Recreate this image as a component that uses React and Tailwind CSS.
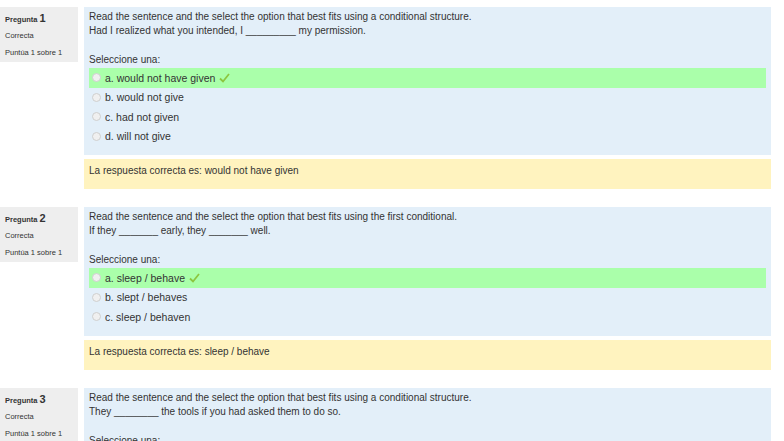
import React from "react";

const questions = [
  {
    num: 1,
    prompt: "Read the sentence and the select the option that best fits using a conditional structure.",
    sentence: "Had I realized what you intended, I _________ my permission.",
    options: ["a. would not have given", "b. would not give", "c. had not given", "d. will not give"],
    correct: "would not have given",
  },
  {
    num: 2,
    prompt: "Read the sentence and the select the option that best fits using the first conditional.",
    sentence: "If they _______ early, they _______ well.",
    options: ["a. sleep / behave", "b. slept / behaves", "c. sleep / behaven"],
    correct: "sleep / behave",
  },
  {
    num: 3,
    prompt: "Read the sentence and the select the option that best fits using a conditional structure.",
    sentence: "They ________ the tools if you had asked them to do so.",
    options: ["a. would have finished", "b. would finish", "c. had finished"],
    correct: "would have finished",
  },
];

function Check() {
  return (
    <svg width="11" height="10" viewBox="0 0 11 10" className="ml-1 inline-block">
      <path d="M1 5.5 L4 8.5 L10 1" fill="none" stroke="#8cc63f" strokeWidth="1.8" />
    </svg>
  );
}

function Question({ q }) {
  return (
    <div className="flex gap-[6px] mb-[18px]">
      <div className="w-[78px] h-[55px] shrink-0 bg-[#eeeeee] pl-[5px] pt-[6px] text-[7.5px] leading-[10px] text-[#333]">
        <div className="font-bold">
          Pregunta <span className="text-[11px]">{q.num}</span>
        </div>
        <div className="mt-[6px]">Correcta</div>
        <div className="mt-[7px]">Puntúa 1 sobre 1</div>
      </div>
      <div className="flex-1 min-w-0">
        <div className="bg-[#e3eff9] px-[5px] pt-[3px] pb-[9px] text-[10px] leading-[14px] text-[#333]">
          <div>{q.prompt}</div>
          <div>{q.sentence}</div>
          <div className="mt-[15px] mb-[1px]">Seleccione una:</div>
          {q.options.map((o, i) => (
            <div
              key={o}
              className={`flex items-center h-[19.5px] pl-[3px] ${i === 0 ? "bg-[#aaffaa]" : ""}`}
            >
              <span className="w-[9px] h-[9px] rounded-full border border-[#cfcfcf] bg-[#f0f0f0] mr-[4px] shrink-0" />
              <span className="leading-[14px] text-[10.5px]">{o}</span>
              {i === 0 && <Check />}
            </div>
          ))}
        </div>
        <div className="bg-[#fff3bf] mt-[4px] h-[30px] pt-[5px] px-[5px] text-[10px] leading-[14px] text-[#333]">
          La respuesta correcta es: {q.correct}
        </div>
      </div>
    </div>
  );
}

export default function App() {
  return (
    <div className="bg-white w-[784px] h-[441px] overflow-hidden pt-[7px] pr-[13px]" style={{ fontFamily: '"Liberation Sans", Arial, sans-serif' }}>
      {questions.map((q) => (
        <Question key={q.num} q={q} />
      ))}
    </div>
  );
}
